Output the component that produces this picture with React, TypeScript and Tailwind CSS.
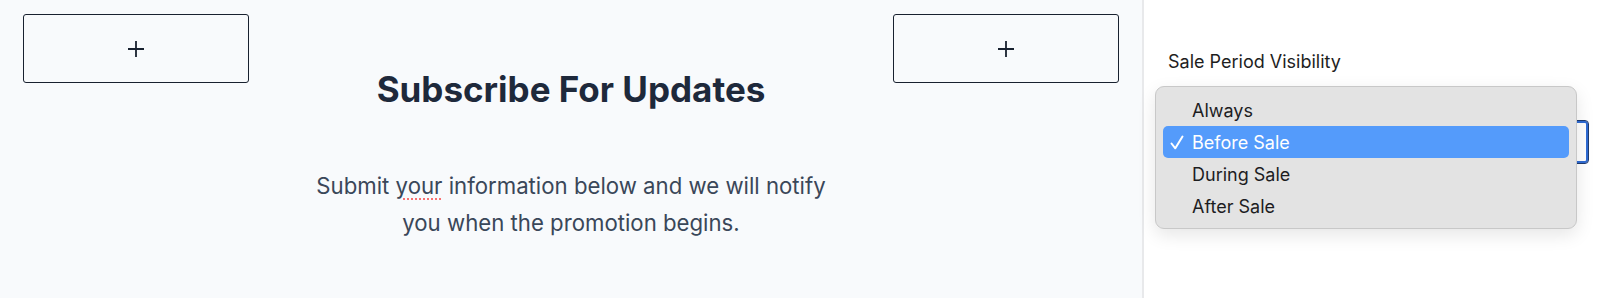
import React from 'react';

const font = { fontFamily: 'Inter, "Noto Sans", sans-serif' };

function PlusBox() {
  return (
    <div className="w-[226px] h-[69px] shrink-0 border-[1.5px] border-[#18212f] rounded-[3px] flex items-center justify-center">
      <svg width="18" height="18" viewBox="0 0 18 18" fill="none">
        <path d="M9 1v16M1 9h16" stroke="#18212f" strokeWidth="1.8" />
      </svg>
    </div>
  );
}

const options = ['Always', 'Before Sale', 'During Sale', 'After Sale'];

export default function App() {
  return (
    <div className="flex h-[298px] w-[1600px] overflow-hidden bg-white" style={font}>
      {/* Canvas */}
      <div className="w-[1142px] shrink-0 bg-[#f8fafc] px-[23px] pt-[14px] flex items-start">
        <PlusBox />
        <div className="flex-1 flex flex-col items-center pt-[54px]">
          <h2 className="text-[35px] leading-[42px] font-bold text-[#1e293b]">Subscribe For Updates</h2>
          <p className="mt-[57px] text-[22.2px] leading-[37px] text-[#3a4759] text-center max-w-[540px]">
            Submit{' '}
            <span className="underline decoration-dotted decoration-[#f87171] decoration-2 underline-offset-[4px]">your</span>{' '}
            information below and we will notify you when the promotion begins.
          </p>
        </div>
        <PlusBox />
      </div>

      {/* Divider */}
      <div className="w-[2px] shrink-0 bg-[#e8e9eb]" />

      {/* Sidebar */}
      <div className="relative flex-1 pt-[49px] pl-[24px] pr-[12px]">
        <div className="text-[18px] leading-[26px] text-[#1e1e1e]">Sale Period Visibility</div>
        <div className="mt-[46px] h-[42px] rounded-[3px] border-2 border-[#2f6bd3] outline outline-1 outline-offset-0 outline-[#1e3a6e]" />

        {/* Open select menu */}
        <div className="absolute left-[11px] top-[86px] w-[422px] rounded-[9px] border border-[#c8c8c8] bg-[#e3e3e3] px-[7px] pt-[7px] pb-[6px] shadow-[0_6px_18px_rgba(0,0,0,0.10)]">
          {options.map((o) => {
            const active = o === 'Before Sale';
            return (
              <div
                key={o}
                className={
                  active
                    ? 'relative h-[32px] rounded-[5px] bg-[#549bfb] pl-[29px] flex items-center text-[18px] text-white'
                    : 'relative h-[32px] rounded-[5px] pl-[29px] flex items-center text-[18px] text-[#1d1d1f]'
                }
              >
                {active && (
                  <svg className="absolute left-[7px] top-[9px]" width="14" height="15" viewBox="0 0 14 15" fill="none">
                    <path d="M1.5 8.5l3.8 4.8L12.5 1.5" stroke="white" strokeWidth="2" strokeLinecap="round" strokeLinejoin="round" />
                  </svg>
                )}
                {o}
              </div>
            );
          })}
        </div>
      </div>
    </div>
  );
}
